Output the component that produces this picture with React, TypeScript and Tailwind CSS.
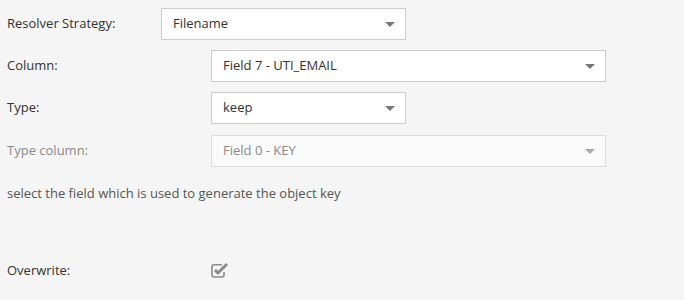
import React from 'react';

function Caret({ disabled }: { disabled?: boolean }) {
  return (
    <svg width="10" height="5" viewBox="0 0 10 5" className="shrink-0">
      <path d="M0 0 L10 0 L5 5 Z" fill={disabled ? '#aaaaaa' : '#777777'} />
    </svg>
  );
}

function Select({ value, width, disabled }: { value: string; width: string; disabled?: boolean }) {
  return (
    <div
      className={`${width} h-[32px] flex items-center justify-between pl-[11px] pr-[10px] border ${
        disabled ? 'bg-[#fafafa] border-[#dddddd] text-[#8a8a8a]' : 'bg-white border-[#cccccc] text-[#333333]'
      }`}
    >
      <span>{value}</span>
      <Caret disabled={disabled} />
    </div>
  );
}

function Row({ label, labelWidth, children, className, muted }: { label: string; labelWidth: string; children: React.ReactNode; className?: string; muted?: boolean }) {
  return (
    <div className={`flex items-center ${className ?? ''}`}>
      <div className={`${labelWidth} shrink-0 ${muted ? 'text-[#8a8a8a]' : 'text-[#333333]'}`}>{label}</div>
      {children}
    </div>
  );
}

export default function App() {
  return (
    <div
      className="w-[684px] h-[300px] bg-[#f5f5f5] pl-[7px] pt-[8px] text-[13px] overflow-hidden"
      style={{ fontFamily: '"Open Sans", "Noto Sans", sans-serif' }}
    >
      <Row label="Resolver Strategy:" labelWidth="w-[154px]">
        <Select value="Filename" width="w-[245px]" />
      </Row>
      <Row label="Column:" labelWidth="w-[204px]" className="mt-[10px]">
        <Select value="Field 7 - UTI_EMAIL" width="w-[395px]" />
      </Row>
      <Row label="Type:" labelWidth="w-[204px]" className="mt-[10px]">
        <Select value="keep" width="w-[195px]" />
      </Row>
      <Row label="Type column:" labelWidth="w-[204px]" className="mt-[11px]" muted>
        <Select value="Field 0 - KEY" width="w-[395px]" disabled />
      </Row>
      <p className="mt-[16px] leading-[20px] text-[#555555]">select the field which is used to generate the object key</p>
      <Row label="Overwrite:" labelWidth="w-[204px]" className="mt-[58px]">
        {/* check-square-o style */}
        <svg width="18" height="16" viewBox="0 0 18 16" className="-mt-[1px]">
          <path d="M11 2.8 H3 Q1 2.8 1 4.8 V13 Q1 15 3 15 H11 Q13 15 13 13 V10" fill="none" stroke="#8a8a8a" strokeWidth="1.6" />
          <path d="M4 8 L7 11 L16 2" fill="none" stroke="#8a8a8a" strokeWidth="3" strokeLinecap="butt" />
        </svg>
      </Row>
    </div>
  );
}
